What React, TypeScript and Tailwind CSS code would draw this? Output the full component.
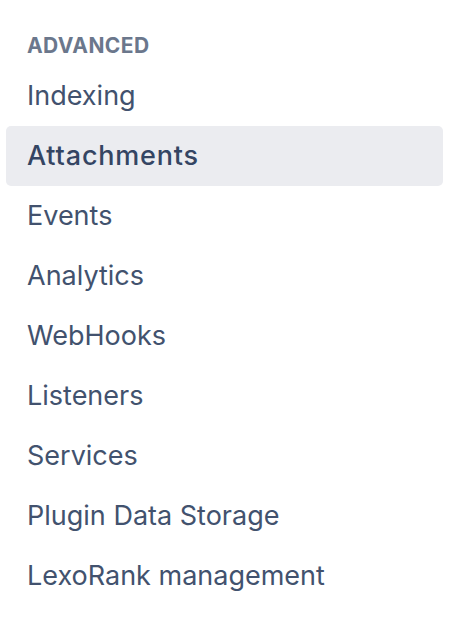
const items = [
  "Indexing",
  "Attachments",
  "Events",
  "Analytics",
  "WebHooks",
  "Listeners",
  "Services",
  "Plugin Data Storage",
  "LexoRank management",
];

const App = (): React.ReactElement => {
  return (
    <div className="min-h-[618px] w-[460px] bg-white pt-[34px] font-['Inter',sans-serif]">
      <h2 className="mb-2 pl-[27px] text-[21px] leading-6 font-bold tracking-[0.02em] text-[#6b778c] uppercase">
        Advanced
      </h2>
      <nav className="flex flex-col pr-[17px] pl-[6px]">
        {items.map((item) => (
          <a
            key={item}
            href="#"
            className={
              item === "Attachments"
                ? "flex h-[60px] items-center rounded-[5px] bg-[#ebecf0] pt-px pl-[21px] text-[27px] font-medium tracking-[0.03em] text-[#344563]"
                : "flex h-[60px] items-center rounded-[5px] pt-px pl-[21px] text-[27px] text-[#42526e]"
            }
          >
            {item}
          </a>
        ))}
      </nav>
    </div>
  );
};

export default App;
